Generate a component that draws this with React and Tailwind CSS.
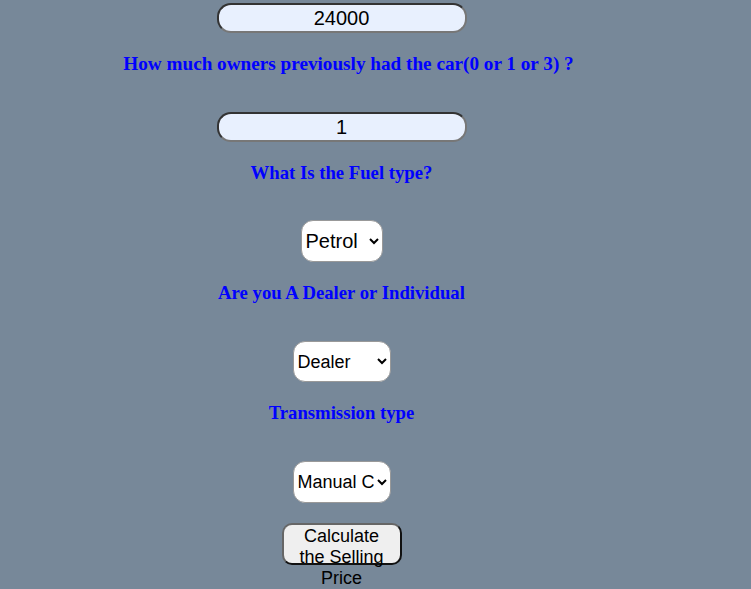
import React from "react";

const Question = ({ children, className = "" }) => (
  <h3
    className={`font-bold leading-[21px] text-[#0000ff] text-center ${className}`}
    style={{ fontFamily: '"Liberation Serif", "Times New Roman", serif' }}
  >
    {children}
  </h3>
);

const App = () => {
  return (
    <div
      className="min-h-[589px] bg-[#778899] text-black"
      style={{ fontFamily: '"Liberation Sans", Arial, sans-serif' }}
    >
      <div className="w-[683px] flex flex-col items-center pt-[3px]">
        <input
          type="text"
          defaultValue="24000"
          className="w-[250px] h-[30px] rounded-[14px] border-2 border-[#333] border-b-[#777] border-r-[#777] bg-[#e8f0fe] text-center text-[20px] outline-none"
        />
        <Question className="mt-[20px] pl-[14px] text-[19.2px]">
          How much owners previously had the car(0 or 1 or 3) ?
        </Question>
        <input
          type="text"
          defaultValue="1"
          className="mt-[38px] w-[250px] h-[30px] rounded-[14px] border-2 border-[#333] border-b-[#777] border-r-[#777] bg-[#e8f0fe] text-center text-[20px] outline-none"
        />
        <Question className="mt-[20px] text-[18.72px]">What Is the Fuel type?</Question>
        <select
          defaultValue="Petrol"
          className="mt-[37px] w-[82px] h-[42px] rounded-[12px] border border-[#999] bg-white text-[20px] pl-0"
        >
          <option>Petrol</option>
          <option>Diesel</option>
          <option>CNG</option>
        </select>
        <Question className="mt-[20px] text-[18.72px]">Are you A Dealer or Individual</Question>
        <select
          defaultValue="Dealer"
          className="mt-[38px] w-[98px] h-[41px] rounded-[12px] border border-[#999] bg-white text-[18px] pl-0"
        >
          <option>Dealer</option>
          <option>Individual</option>
        </select>
        <Question className="mt-[20px] text-[18.72px]">Transmission type</Question>
        <select
          defaultValue="Manual Car"
          className="mt-[38px] w-[98px] h-[42px] rounded-[12px] border border-[#999] bg-white text-[18px] pl-0"
        >
          <option>Manual Car</option>
          <option>Automatic Car</option>
        </select>
        <button
          type="button"
          className="mt-[20px] w-[120px] h-[42px] rounded-[10px] border-2 border-[#666] border-b-[#111] border-r-[#111] bg-[#efefef] text-[18px] leading-[21px] flex flex-col justify-start items-center overflow-visible px-[6px] pt-[1px]"
        >
          <span className="block text-center">Calculate the Selling Price</span>
        </button>
      </div>
    </div>
  );
};

export default App;
